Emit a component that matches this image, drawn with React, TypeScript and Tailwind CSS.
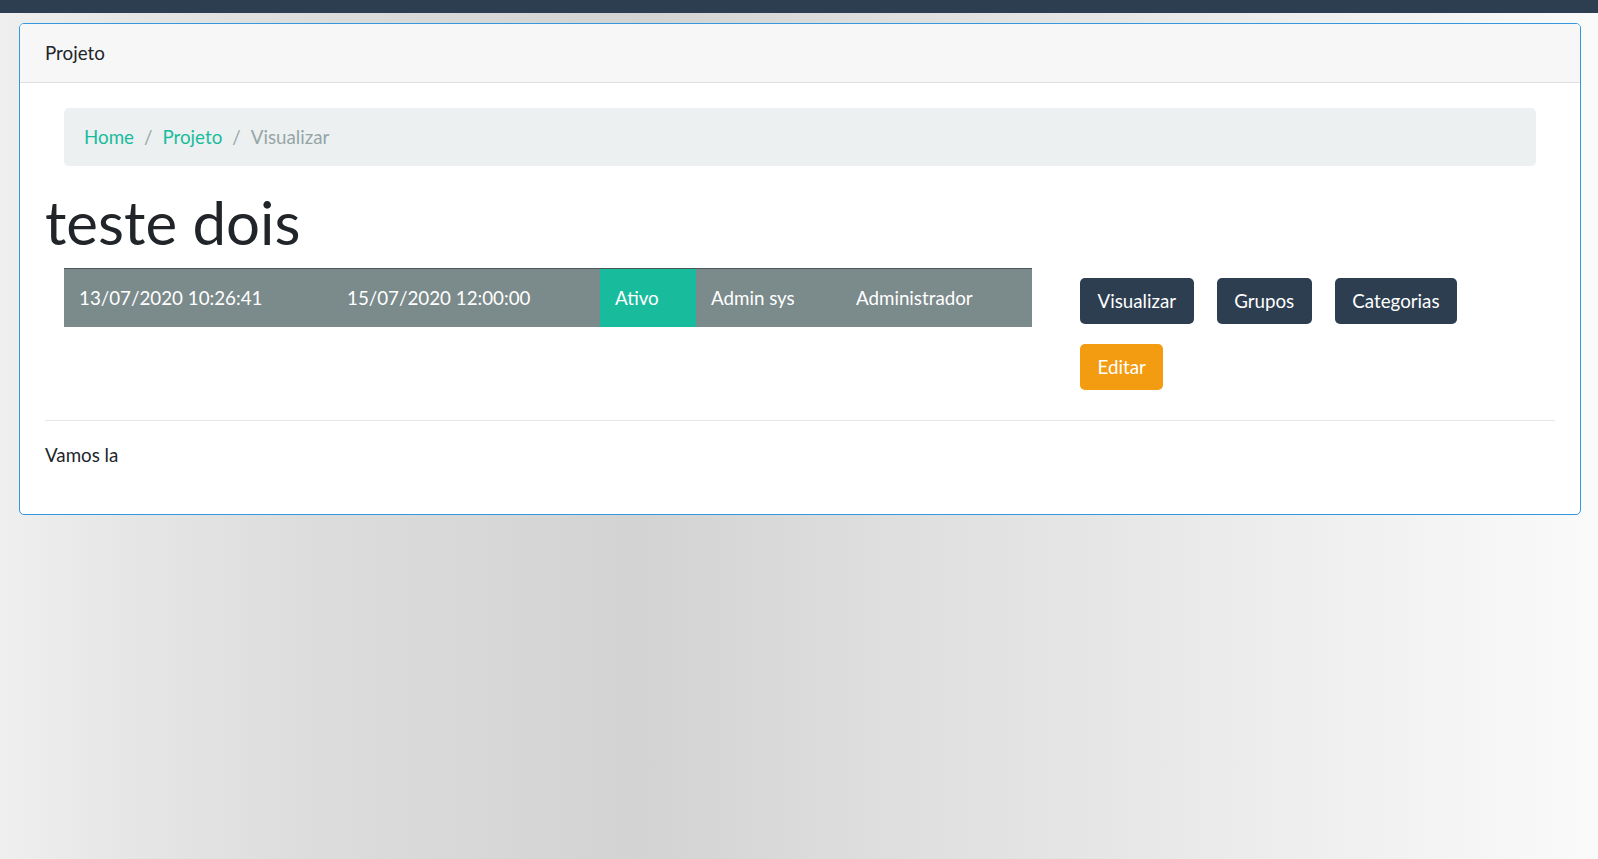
export default function App() {
  const cells = [
    { text: "13/07/2020 10:26:41", w: "w-[268px]", bg: "" },
    { text: "15/07/2020 12:00:00", w: "w-[268px]", bg: "" },
    { text: "Ativo", w: "w-[96px]", bg: "bg-[#18bc9c]" },
    { text: "Admin sys", w: "w-[145px]", bg: "" },
    { text: "Administrador", w: "w-[191px]", bg: "" },
  ];

  return (
    <div className="min-h-screen bg-[linear-gradient(to_right,#efefef_0%,#e6e6e6_8%,#dcdcdc_20%,#d3d3d3_40%,#dedede_55%,#e6e6e6_69%,#eeeeee_81%,#fafafa_100%)] font-['Lato','Noto_Sans',sans-serif] text-[#212529]">
      <div className="h-[13px] bg-[#2c3e50]" />

      <div className="ml-[19px] mr-[17px] mt-[10px] overflow-hidden rounded-[5px] border border-[#3498db] bg-white">
        <div className="border-b border-[#dfdfdf] bg-[#f7f7f7] px-[25px] py-[15px] text-[18.75px] leading-[28px]">
          Projeto
        </div>

        <div className="p-[25px]">
          <div className="px-[19px]">
            <nav className="mb-[20px] flex items-center rounded-[5px] bg-[#ecf0f1] px-[20px] py-[15px] text-[18.75px] leading-[28px]">
              <a className="text-[#18bc9c]">Home</a>
              <span className="px-[10px] text-[#95a5a6]">/</span>
              <a className="text-[#18bc9c]">Projeto</a>
              <span className="px-[10px] text-[#95a5a6]">/</span>
              <span className="text-[#95a5a6]">Visualizar</span>
            </nav>
          </div>

          <h1 className="mb-[10px] text-[60px] font-normal leading-[72px]">teste dois</h1>

          <div className="flex items-start">
            <div className="w-[987px] pl-[19px]">
              <table className="w-[968px] table-fixed border-collapse text-[18.75px] leading-[28px] text-white">
                <tbody>
                  <tr className="border-t border-[#4a5556] bg-[#7b8a8b]">
                    {cells.map((c) => (
                      <td key={c.text} className={`${c.w} ${c.bg} p-[15px] font-normal`}>
                        {c.text}
                      </td>
                    ))}
                  </tr>
                </tbody>
              </table>
            </div>

            <div className="ml-[48px] flex flex-col gap-[20px] pt-[10px]">
              <div className="flex gap-[23px]">
                <button className="rounded-[5px] bg-[#2c3e50] px-[17.5px] py-[9px] text-[18.75px] leading-[28px] text-white">
                  Visualizar
                </button>
                <button className="rounded-[5px] bg-[#2c3e50] px-[17.5px] py-[9px] text-[18.75px] leading-[28px] text-white">
                  Grupos
                </button>
                <button className="rounded-[5px] bg-[#2c3e50] px-[17.5px] py-[9px] text-[18.75px] leading-[28px] text-white">
                  Categorias
                </button>
              </div>
              <div className="flex">
                <button className="rounded-[5px] bg-[#f39c12] px-[17.5px] py-[9px] text-[18.75px] leading-[28px] text-white">
                  Editar
                </button>
              </div>
            </div>
          </div>

          <hr className="mb-[20px] mt-[30px] border-0 border-t border-[#e6e6e6]" />

          <p className="mb-[20px] text-[18.75px] leading-[28px]">Vamos la</p>
        </div>
      </div>
    </div>
  );
}
